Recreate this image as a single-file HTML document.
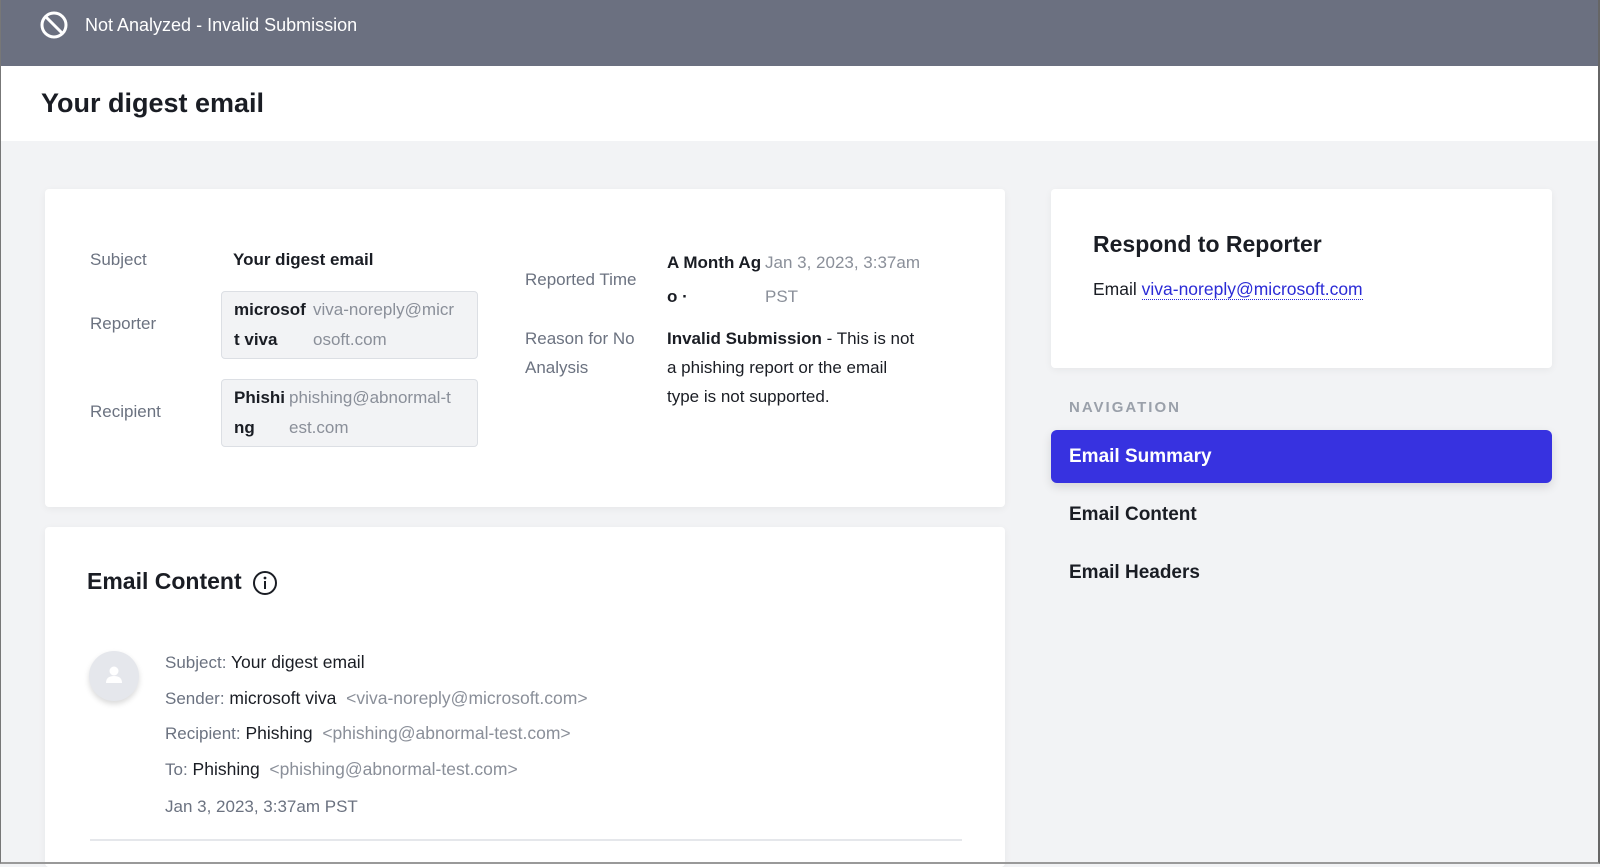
<!DOCTYPE html>
<html><head><meta charset="utf-8"><style>
*{margin:0;padding:0;box-sizing:border-box}
body{width:1600px;height:864px;overflow:hidden;background:#f2f3f5;font-family:"Liberation Sans",Arial,sans-serif;color:#1a1d24;position:relative}
.a{position:absolute;white-space:nowrap}
.top{left:0;top:0;width:1600px;height:66px;background:#6b7080}
.hdr{left:0;top:66px;width:1600px;height:75px;background:#fff}
.card{background:#fff;border-radius:4px;box-shadow:0 2px 8px rgba(0,0,0,.05)}
.lbl{color:#6b7280;font-size:17px}
.val{font-size:17px;font-weight:bold}
.box{background:#f2f3f5;border:1px solid #dcdfe4;border-radius:4px}
.g{color:#8a8f99}
.frame{left:0;top:0;width:1600px;height:864px;border-left:1px solid #777;border-right:2px solid #666;border-bottom:2px solid #999;pointer-events:none}
</style></head><body>
<div class="a top"></div>
<svg class="a" style="left:39px;top:10px" width="30" height="30" viewBox="0 0 30 30"><circle cx="15" cy="15" r="12" fill="none" stroke="#fff" stroke-width="3"/><line x1="6.5" y1="6.5" x2="23.5" y2="23.5" stroke="#fff" stroke-width="3"/></svg>
<div class="a" style="left:85px;top:15px;color:#fff;font-size:18px">Not Analyzed - Invalid Submission</div>
<div class="a hdr"></div>
<div class="a" style="left:41px;top:88px;font-size:27px;font-weight:bold">Your digest email</div>

<div class="a card" style="left:45px;top:189px;width:960px;height:318px"></div>
<div class="a lbl" style="left:90px;top:250px">Subject</div>
<div class="a val" style="left:233px;top:250px">Your digest email</div>
<div class="a lbl" style="left:90px;top:314px">Reporter</div>
<div class="a box" style="left:221px;top:291px;width:257px;height:68px"></div>
<div class="a val" style="left:234px;top:295px;line-height:30px">microsof<br>t viva</div>
<div class="a g" style="left:313px;top:295px;font-size:17px;line-height:30px">viva-noreply@micr<br>osoft.com</div>
<div class="a lbl" style="left:90px;top:402px">Recipient</div>
<div class="a box" style="left:221px;top:379px;width:257px;height:68px"></div>
<div class="a val" style="left:234px;top:383px;line-height:30px">Phishi<br>ng</div>
<div class="a g" style="left:289px;top:383px;font-size:17px;line-height:30px">phishing@abnormal-t<br>est.com</div>
<div class="a lbl" style="left:525px;top:270px">Reported Time</div>
<div class="a val" style="left:667px;top:246px;line-height:34px">A Month Ag<br>o ·</div>
<div class="a g" style="left:765px;top:246px;font-size:17px;line-height:34px">Jan 3, 2023, 3:37am<br>PST</div>
<div class="a lbl" style="left:525px;top:324px;line-height:29px">Reason for No<br>Analysis</div>
<div class="a" style="left:667px;top:324px;font-size:17px;line-height:29px"><b>Invalid Submission</b> - This is not<br>a phishing report or the email<br>type is not supported.</div>

<div class="a card" style="left:45px;top:527px;width:960px;height:340px"></div>
<div class="a" style="left:87px;top:568px;font-size:23px;font-weight:bold">Email Content</div>
<svg class="a" style="left:252px;top:570px" width="26" height="26" viewBox="0 0 26 26"><circle cx="13" cy="13" r="11" fill="none" stroke="#1a1d24" stroke-width="2"/><circle cx="13" cy="8" r="1.4" fill="#1a1d24"/><rect x="12" y="11" width="2" height="8" fill="#1a1d24"/></svg>
<div class="a" style="left:89px;top:651px;width:50px;height:50px;border-radius:50%;background:#e5e7ec;box-shadow:0 3px 6px rgba(0,0,0,.15)"></div>
<svg class="a" style="left:104px;top:664px" width="20" height="22" viewBox="0 0 20 22"><circle cx="10" cy="7" r="4.5" fill="#fff"/><path d="M2 19 Q2 12 10 12 Q18 12 18 19 Z" fill="#fff"/></svg>
<div class="a" style="left:165px;top:645px;font-size:17.5px;line-height:34.5px"><span class="lbl">Subject:</span> Your digest email<br><span class="lbl">Sender:</span> microsoft viva &nbsp;<span class="g">&lt;viva-noreply@microsoft.com&gt;</span><br><span class="lbl">Recipient:</span> Phishing &nbsp;<span class="g">&lt;phishing@abnormal-test.com&gt;</span><br><span class="lbl">To:</span> Phishing &nbsp;<span class="g">&lt;phishing@abnormal-test.com&gt;</span><br><span class="lbl" style="line-height:40px">Jan 3, 2023, 3:37am PST</span></div>
<div class="a" style="left:90px;top:839px;width:872px;height:2px;background:#e5e7eb"></div>

<div class="a card" style="left:1051px;top:189px;width:501px;height:179px"></div>
<div class="a" style="left:1093px;top:231px;font-size:23px;font-weight:bold">Respond to Reporter</div>
<div class="a" style="left:1093px;top:279px;font-size:17.5px">Email <span style="color:#2b2bd6;border-bottom:1px dotted #2b2bd6">viva-noreply@microsoft.com</span></div>
<div class="a" style="left:1069px;top:399px;font-size:15px;font-weight:bold;letter-spacing:2px;color:#9aa0aa">NAVIGATION</div>
<div class="a" style="left:1051px;top:430px;width:501px;height:53px;background:#3732e0;border-radius:6px;box-shadow:0 4px 10px rgba(0,0,0,.12)"></div>
<div class="a" style="left:1069px;top:446px;font-size:19px;font-weight:bold;color:#fff">Email Summary</div>
<div class="a" style="left:1069px;top:504px;font-size:19px;font-weight:bold">Email Content</div>
<div class="a" style="left:1069px;top:562px;font-size:19px;font-weight:bold">Email Headers</div>
<div class="a frame"></div>
</body></html>
